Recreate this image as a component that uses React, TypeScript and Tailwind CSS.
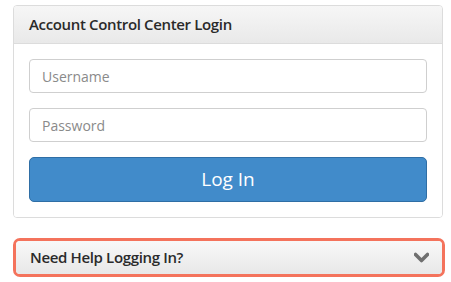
import React from "react";

export default function App() {
  return (
    <div className="w-[451px] h-[282px] bg-white pl-[13px] pt-[5px] pr-[8px]" style={{ fontFamily: '"Open Sans", "Liberation Sans", sans-serif' }}>
      <div className="w-[430px] border border-[#dcdcdc] rounded-[4px] overflow-hidden">
        <div className="h-[38px] bg-gradient-to-b from-[#f6f6f6] to-[#e9e9e9] border-b border-[#dcdcdc] flex items-center pl-[15px] text-[15px] font-semibold text-[#2a2a2a] tracking-[-0.35px]">
          Account Control Center Login
        </div>
        <div className="p-[15px] flex flex-col gap-[15px] bg-white">
          <input
            className="h-[34px] w-full border border-[#cfcfcf] rounded-[4px] px-[12px] text-[14px] text-[#555] placeholder:text-[#8a8a8a] outline-none"
            placeholder="Username"
          />
          <input
            type="password"
            className="h-[34px] w-full border border-[#cfcfcf] rounded-[4px] px-[12px] text-[14px] text-[#555] placeholder:text-[#8a8a8a] outline-none"
            placeholder="Password"
          />
          <button className="h-[45px] w-full rounded-[5px] bg-[#418bca] border border-[#2f6ea5] text-white text-[19px] flex items-center justify-center">
            Log In
          </button>
        </div>
      </div>
      <div className="mt-[20px] w-[432px] h-[39px] border-[3px] border-[#f4735c] rounded-[7px] overflow-hidden">
        <div className="h-full bg-gradient-to-b from-[#f8f8f8] to-[#e8e8e8] flex items-center justify-between pl-[14px] pr-[13px] text-[15px] font-semibold text-[#2a2a2a] tracking-[-0.35px]">
          <span>Need Help Logging In?</span>
          <svg width="15" height="11" viewBox="0 0 15 11">
            <path d="M1.5 2.5 L7.5 8.5 L13.5 2.5" fill="none" stroke="#6f6f6f" strokeWidth="3.6" strokeLinecap="round" strokeLinejoin="round" />
          </svg>
        </div>
      </div>
    </div>
  );
}
